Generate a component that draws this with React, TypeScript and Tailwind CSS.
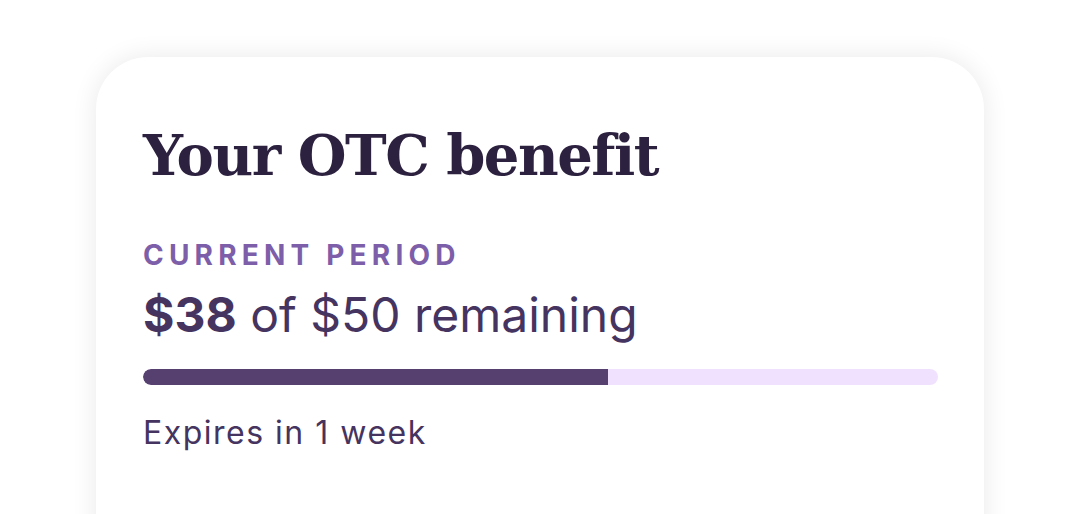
export default function App() {
  return (
    <div className="min-h-[514px] h-[514px] overflow-hidden bg-white pt-[57px] pl-[96px]">
      {/* Benefit card */}
      <div className="w-[888px] h-[520px] bg-white rounded-[52px] shadow-[0_0_26px_rgba(0,0,0,0.09)] px-[47px] pt-[70px]">
        <h1 className="font-['DejaVu_Serif',serif] font-bold text-[56px] leading-[56px] tracking-[-1.5px] text-[#2d2140]">
          Your OTC benefit
        </h1>
        <div className="mt-[56px] font-['Inter',sans-serif] font-bold text-[28px] leading-[32px] tracking-[5.2px] text-[#7d5ea9]">
          CURRENT PERIOD
        </div>
        <div className="mt-[18px] font-['Inter',sans-serif] text-[48px] leading-[52px] text-[#45345f]">
          <span className="font-bold">$38</span> of $50 remaining
        </div>
        <div className="mt-[28px] h-[16px] w-[795px] rounded-full bg-[#f0e2fe] overflow-hidden">
          <div className="h-full bg-[#56406f] rounded-l-full" style={{ width: "58.5%" }} />
        </div>
        <div className="mt-[28px] font-['Inter',sans-serif] text-[32px] leading-[40px] tracking-[1.5px] text-[#45345f]">
          Expires in 1 week
        </div>
      </div>
    </div>
  );
}
